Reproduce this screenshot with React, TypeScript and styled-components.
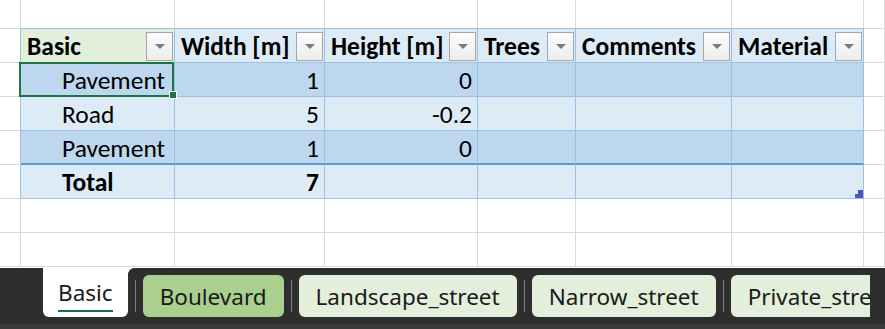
import React from 'react';
import styled, { createGlobalStyle, css } from 'styled-components';

type Line = 'grid' | 'table' | 'thick';

const lineColors: Record<Line, string> = {
  grid: '#d9d9d9',
  table: '#9bc2e6',
  thick: '#5b9bd5',
};

const columnWidths = [21, 154, 150, 153, 98, 156, 132];
const headers = ['Basic', 'Width [m]', 'Height [m]', 'Trees', 'Comments', 'Material'];
const streets = [
  { name: 'Pavement', width: '1', height: '0' },
  { name: 'Road', width: '5', height: '-0.2' },
  { name: 'Pavement', width: '1', height: '0' },
];
const sheets = ['Basic', 'Boulevard', 'Landscape_street', 'Narrow_street', 'Private_street'];

const GlobalStyle = createGlobalStyle`
  html, body {
    margin: 0;
    padding: 0;
    background: #ffffff;
    overflow: hidden;
  }
`;

const Page = styled.div`
  width: 885px;
  height: 329px;
  display: flex;
  flex-direction: column;
  overflow: hidden;
`;

const Sheet = styled.div`
  height: 268px;
  display: grid;
  grid-template-columns: ${columnWidths.map(w => `${w}px`).join(' ')} 1fr;
  grid-template-rows: 29px repeat(7, 34px);
  align-content: start;
  font-family: Carlito, Lato, 'Liberation Sans', sans-serif;
  font-size: 25.5px;
  color: #000;
`;

const Cell = styled.div<{
  $fill?: string;
  $right: Line;
  $bottom: Line;
  $align?: 'left' | 'right';
  $indent?: number;
  $bold?: boolean;
  $selected?: boolean;
}>`
  box-sizing: border-box;
  position: relative;
  display: flex;
  align-items: center;
  justify-content: ${p => (p.$align === 'right' ? 'flex-end' : 'flex-start')};
  padding: 2px 5px 0 ${p => p.$indent ?? 6}px;
  background: ${p => p.$fill ?? '#ffffff'};
  border-right: 1px solid ${p => lineColors[p.$right]};
  border-bottom: ${p => (p.$bottom === 'thick' ? 2 : 1)}px solid ${p => lineColors[p.$bottom]};
  font-weight: ${p => (p.$bold ? 700 : 400)};
  white-space: nowrap;

  ${p =>
    p.$selected &&
    css`
      z-index: 2;
      &::after {
        content: '';
        position: absolute;
        top: -1px;
        left: -2px;
        right: 0;
        bottom: -1px;
        border: 2px solid #217346;
      }
      &::before {
        content: '';
        position: absolute;
        left: 148px;
        top: 28px;
        width: 6px;
        height: 6px;
        background: #217346;
        border: 1px solid #ffffff;
        z-index: 3;
      }
    `}
`;

const HeaderCell = styled(Cell)`
  justify-content: space-between;
  padding: 2px 1px 0 6px;
`;

const FilterButton = styled.span`
  box-sizing: border-box;
  align-self: flex-end;
  margin-bottom: 1px;
  width: 27px;
  height: 29px;
  display: flex;
  align-items: center;
  justify-content: center;
  border: 1px solid #a6a6a6;
  background: linear-gradient(#fbfbfb, #ededed);
  flex-shrink: 0;
`;

const CornerCell = styled(Cell)`
  align-items: flex-end;
  justify-content: flex-end;
  padding: 0;
`;

const TabBar = styled.div`
  flex: 1;
  display: flex;
  flex-direction: column;
  background: #2e2e2e;
`;

const TabRow = styled.div`
  height: 49px;
  display: flex;
  padding: 0 15px 0 43px;
`;

const TabStrip = styled.div`
  flex: 1;
  display: flex;
  align-items: flex-end;
  gap: 7px;
  overflow: hidden;
  font-family: 'Noto Sans', 'Open Sans', sans-serif;
  font-size: 22.5px;
  color: #1a1a1a;
`;

const ActiveTab = styled.div`
  position: relative;
  height: 49px;
  box-sizing: border-box;
  padding: 0 15px 5px;
  display: flex;
  flex-direction: column;
  justify-content: flex-end;
  align-items: center;
  background: #ffffff;
  border-radius: 0 0 6px 6px;
  flex-shrink: 0;

  &::before,
  &::after {
    content: '';
    position: absolute;
    top: 0;
    width: 6px;
    height: 6px;
  }
  &::before {
    left: -6px;
    background: radial-gradient(circle at 0 100%, transparent 5.5px, #ffffff 6px);
  }
  &::after {
    right: -6px;
    background: radial-gradient(circle at 100% 100%, transparent 5.5px, #ffffff 6px);
  }
`;

const ActiveLabel = styled.span`
  line-height: 26px;
  padding-bottom: 4px;
  border-bottom: 2px solid #1d7044;
`;

const Tab = styled.div<{ $tone: 'strong' | 'soft' }>`
  height: 42px;
  box-sizing: border-box;
  padding: 0 17px;
  display: flex;
  align-items: center;
  border-radius: 6px;
  background: ${p => (p.$tone === 'strong' ? '#a9d08e' : '#e2efda')};
  white-space: nowrap;
  flex-shrink: 0;
`;

const Divider = styled.span`
  width: 1px;
  height: 32px;
  margin-bottom: 5px;
  background: #7d7d7d;
  flex-shrink: 0;
`;

const BottomStrip = styled.div`
  height: 5px;
  margin-top: auto;
  background: #3b3b3b;
`;

const Caret = () => (
  <svg width='10' height='5' viewBox='0 0 10 5'>
    <polygon points='0,0 10,0 5,5' fill='#7a7a7a' />
  </svg>
);

const ResizeMark = () => (
  <svg width='8' height='8' viewBox='0 0 8 8'>
    <path d='M0 8 V4 H3 V0 H8 V8 Z' fill='#4a58b8' />
  </svg>
);

const blankRow = (row: number, inTable: boolean, topOfTable = false) =>
  Array.from({ length: 8 }, (_, col) => {
    const tableCol = col >= 1 && col <= 6;
    return (
      <Cell
        key={`${row}-${col}`}
        $right={inTable && col <= 6 ? 'table' : 'grid'}
        $bottom={topOfTable && tableCol ? 'table' : 'grid'}
      />
    );
  });

const App = () => {
  const bandFill = (i: number) => (i % 2 === 0 ? '#bdd7ee' : '#ddebf7');

  return (
    <Page>
      <GlobalStyle />
      <Sheet>
        {blankRow(0, false, true)}

        <Cell $right='table' $bottom='grid' />
        {headers.map((title, i) => (
          <HeaderCell
            key={title}
            $fill={i === 0 ? '#e2efda' : '#ddebf7'}
            $right='table'
            $bottom='table'
            $bold
          >
            <span>{title}</span>
            <FilterButton>
              <Caret />
            </FilterButton>
          </HeaderCell>
        ))}
        <Cell $right='grid' $bottom='grid' />

        {streets.map((street, i) => {
          const fill = bandFill(i);
          const bottom: Line = i === streets.length - 1 ? 'thick' : 'table';
          return (
            <React.Fragment key={i}>
              <Cell $right='table' $bottom='grid' />
              <Cell $fill={fill} $right='table' $bottom={bottom} $indent={41} $selected={i === 0}>
                {street.name}
              </Cell>
              <Cell $fill={fill} $right='table' $bottom={bottom} $align='right'>
                {street.width}
              </Cell>
              <Cell $fill={fill} $right='table' $bottom={bottom} $align='right'>
                {street.height}
              </Cell>
              <Cell $fill={fill} $right='table' $bottom={bottom} />
              <Cell $fill={fill} $right='table' $bottom={bottom} />
              <Cell $fill={fill} $right='table' $bottom={bottom} />
              <Cell $right='grid' $bottom='grid' />
            </React.Fragment>
          );
        })}

        <Cell $right='table' $bottom='grid' />
        <Cell $fill='#ddebf7' $right='table' $bottom='table' $indent={41} $bold>
          Total
        </Cell>
        <Cell $fill='#ddebf7' $right='table' $bottom='table' $align='right' $bold>
          7
        </Cell>
        <Cell $fill='#ddebf7' $right='table' $bottom='table' />
        <Cell $fill='#ddebf7' $right='table' $bottom='table' />
        <Cell $fill='#ddebf7' $right='table' $bottom='table' />
        <CornerCell $fill='#ddebf7' $right='table' $bottom='table'>
          <ResizeMark />
        </CornerCell>
        <Cell $right='grid' $bottom='grid' />

        {blankRow(6, false)}
        {blankRow(7, false)}
      </Sheet>

      <TabBar>
        <TabRow>
          <TabStrip>
            <ActiveTab>
              <ActiveLabel>{sheets[0]}</ActiveLabel>
            </ActiveTab>
            {sheets.slice(1).map((name, i) => (
              <React.Fragment key={name}>
                <Divider />
                <Tab $tone={i === 0 ? 'strong' : 'soft'}>{name}</Tab>
              </React.Fragment>
            ))}
          </TabStrip>
        </TabRow>
        <BottomStrip />
      </TabBar>
    </Page>
  );
};

export default App;
